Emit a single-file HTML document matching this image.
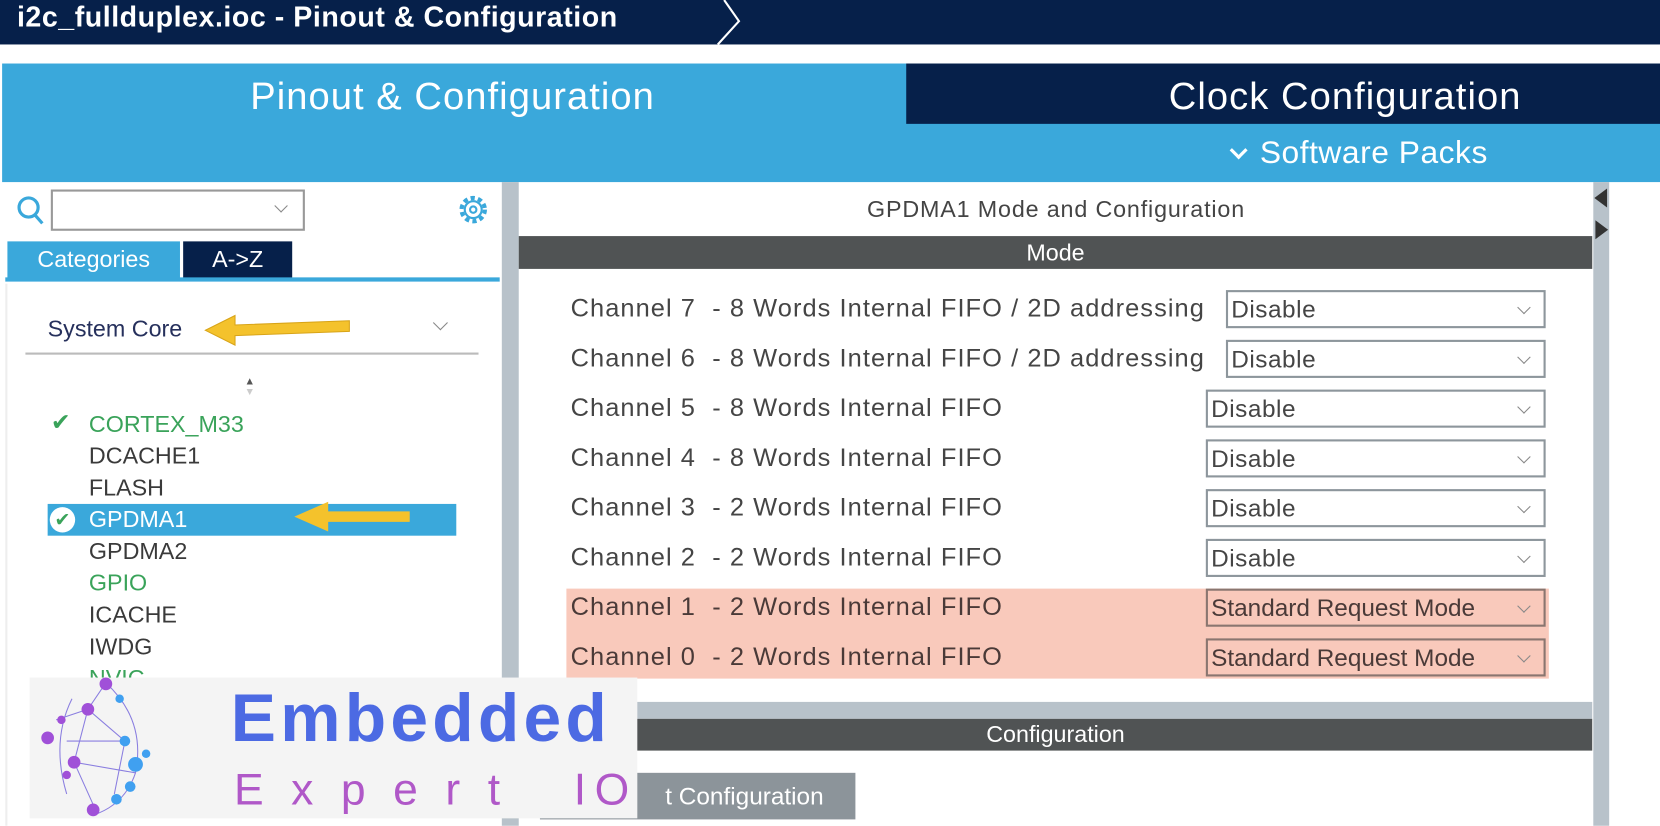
<!DOCTYPE html>
<html><head><meta charset="utf-8"><style>
*{margin:0;padding:0;box-sizing:border-box}
html,body{width:1660px;height:826px;overflow:hidden;background:#fff}
#w{position:absolute;left:0;top:0;width:1568px;height:780px;transform:scale(1.05867);transform-origin:0 0;font-family:"Liberation Sans",sans-serif}
.a{position:absolute}
.t{position:absolute;white-space:nowrap}
.lbl{font-size:24px;color:#454545;left:539px;letter-spacing:1px;white-space:pre}
.sel{position:absolute;height:36px;border:2px solid #8d969c;background:#fff;font-size:23px;color:#454545;padding-left:3px;line-height:32px;left:1139px;width:321px;letter-spacing:0.5px}
.sel:after{content:"";position:absolute;right:14px;top:10px;width:8px;height:8px;border-right:1.5px solid #888;border-bottom:1.5px solid #888;transform:rotate(45deg)}
.pk{background:#f9c9bb;border-color:#8a7670;color:#4a3a38;letter-spacing:0}
.li{position:absolute;left:84px;font-size:22px;color:#3a3a3a}
.g{color:#3aa35a}
</style></head><body><div id="w">
<div class="a" style="left:0;top:0;width:1568px;height:42px;background:#06204a"></div>
<div class="t" style="left:16px;top:1px;font-size:27px;font-weight:bold;color:#fff;letter-spacing:0.5px">i2c_fullduplex.ioc - Pinout &amp; Configuration</div>
<svg class="a" style="left:670px;top:0" width="40" height="42"><path d="M14 0 L28 20 L8 42" stroke="#fff" stroke-width="2" fill="none"/></svg>
<div class="a" style="left:2px;top:60px;width:1566px;height:112px;background:#3aa8db"></div>
<div class="t" style="left:2px;top:70px;width:851px;text-align:center;font-size:36px;color:#fff;letter-spacing:1px">Pinout &amp; Configuration</div>
<div class="a" style="left:856px;top:60px;width:712px;height:57px;background:#06204a"></div>
<div class="t" style="left:1104px;top:70px;font-size:36px;color:#fff;letter-spacing:1px">Clock Configuration</div>
<div class="t" style="left:1160px;top:128px;font-size:30px;color:#fff;letter-spacing:0.5px"><span style="display:inline-block;width:12px;height:12px;border-right:3px solid #fff;border-bottom:3px solid #fff;transform:rotate(45deg);margin:0 14px 6px 4px"></span>Software Packs</div>

<svg class="a" style="left:14px;top:183px" width="30" height="32"><circle cx="13" cy="13" r="9" stroke="#3aa8db" stroke-width="3" fill="none"/><path d="M19 20 L26 28" stroke="#3aa8db" stroke-width="3"/></svg>
<div class="a" style="left:48px;top:179px;width:240px;height:39px;border:2px solid #999"></div>
<div class="a" style="left:261px;top:190px;width:9px;height:9px;border-right:1.5px solid #888;border-bottom:1.5px solid #888;transform:rotate(45deg)"></div>
<svg class="a" style="left:432px;top:183px" width="30" height="32"><circle cx="15" cy="15" r="11" stroke="#3aa8db" stroke-width="4" stroke-dasharray="4 3" fill="none"/><circle cx="15" cy="15" r="8" stroke="#3aa8db" stroke-width="2" fill="none"/><circle cx="15" cy="15" r="3" stroke="#3aa8db" stroke-width="2" fill="none"/></svg>
<div class="a" style="left:7px;top:228px;width:163px;height:36px;background:#3aa8db;color:#fff;font-size:22px;text-align:center;line-height:34px">Categories</div>
<div class="a" style="left:173px;top:228px;width:103px;height:36px;background:#06204a;color:#fff;font-size:22px;text-align:center;line-height:34px">A-&gt;Z</div>
<div class="a" style="left:5px;top:262px;width:467px;height:4px;background:#3aa8db"></div>
<div class="a" style="left:5px;top:268px;width:2px;height:512px;background:#eee"></div>
<div class="t" style="left:45px;top:298px;font-size:22px;color:#26305c">System Core</div>
<div class="a" style="left:411px;top:300px;width:10px;height:10px;border-right:1.5px solid #888;border-bottom:1.5px solid #888;transform:rotate(45deg)"></div>
<div class="a" style="left:24px;top:333px;width:428px;height:2px;background:#bbb"></div>
<div class="t" style="left:231px;top:356px;font-size:10px;color:#555;line-height:10px">▲<br><span style="color:#ccc">▼</span></div>
<div class="t" style="left:48px;top:386px;font-size:22px;color:#3aa35a">✔</div>
<div class="li g" style="top:388px">CORTEX_M33</div>
<div class="li" style="top:418px">DCACHE1</div>
<div class="li" style="top:448px">FLASH</div>
<div class="a" style="left:45px;top:476px;width:386px;height:30px;background:#3aa8db"></div>
<div class="a" style="left:47px;top:479px;width:24px;height:24px;border-radius:50%;background:#fff;color:#3aa35a;font-size:18px;text-align:center;line-height:24px">✔</div>
<div class="li" style="top:478px;color:#fff">GPDMA1</div>
<div class="li" style="top:508px">GPDMA2</div>
<div class="li g" style="top:538px">GPIO</div>
<div class="li" style="top:568px">ICACHE</div>
<div class="li" style="top:598px">IWDG</div>
<div class="li g" style="top:628px">NVIC</div>

<svg class="a" style="left:180px;top:290px" width="160" height="40"><path d="M150 13 L42 17 L42 8 L14 22 L42 36 L42 27 L150 23 Z" fill="#f4c22c" stroke="#d8a418" stroke-width="1"/></svg>
<svg class="a" style="left:270px;top:470px" width="130" height="36"><path d="M117 13 L40 13 L40 4 L8 18 L40 32 L40 23 L117 23 Z" fill="#f4c22c"/></svg>

<div class="a" style="left:474px;top:172px;width:16px;height:608px;background:#b8c2ca"></div>
<div class="a" style="left:1505px;top:172px;width:15px;height:608px;background:#b8c2ca"></div>
<div class="a" style="left:1506px;top:178px;width:0;height:0;border-top:9px solid transparent;border-bottom:9px solid transparent;border-right:12px solid #333"></div>
<div class="a" style="left:1507px;top:208px;width:0;height:0;border-top:9px solid transparent;border-bottom:9px solid transparent;border-left:12px solid #333"></div>
<div class="t" style="left:490px;top:185px;width:1015px;text-align:center;font-size:22px;color:#444;letter-spacing:0.8px">GPDMA1 Mode and Configuration</div>
<div class="a" style="left:490px;top:223px;width:1014px;height:31px;background:#505354;color:#fff;font-size:22px;text-align:center;line-height:31px">Mode</div>

<div class="a" style="left:535px;top:556px;width:928px;height:85px;background:#f9c9bb"></div>
<div class="t lbl" style="top:278px">Channel 7  - 8 Words Internal FIFO / 2D addressing</div>
<div class="t lbl" style="top:325px">Channel 6  - 8 Words Internal FIFO / 2D addressing</div>
<div class="t lbl" style="top:372px">Channel 5  - 8 Words Internal FIFO</div>
<div class="t lbl" style="top:419px">Channel 4  - 8 Words Internal FIFO</div>
<div class="t lbl" style="top:466px">Channel 3  - 2 Words Internal FIFO</div>
<div class="t lbl" style="top:513px">Channel 2  - 2 Words Internal FIFO</div>
<div class="t lbl" style="top:560px;color:#4a3a38">Channel 1  - 2 Words Internal FIFO</div>
<div class="t lbl" style="top:607px;color:#4a3a38">Channel 0  - 2 Words Internal FIFO</div>
<div class="sel" style="top:274px;left:1158px;width:302px">Disable</div>
<div class="sel" style="top:321px;left:1158px;width:302px">Disable</div>
<div class="sel" style="top:368px">Disable</div>
<div class="sel" style="top:415px">Disable</div>
<div class="sel" style="top:462px">Disable</div>
<div class="sel" style="top:509px">Disable</div>
<div class="sel pk" style="top:556px">Standard Request Mode</div>
<div class="sel pk" style="top:603px">Standard Request Mode</div>

<div class="a" style="left:490px;top:663px;width:1014px;height:16px;background:#b8c2ca"></div>
<div class="a" style="left:490px;top:679px;width:1014px;height:30px;background:#505354;color:#fff;font-size:22px;text-align:center;line-height:30px">Configuration</div>
<div class="a" style="left:510px;top:730px;width:298px;height:44px;background:#8c949a;color:#fff;font-size:23px;line-height:44px;text-align:right;padding-right:30px">t Configuration</div>

<div class="a" style="left:28px;top:640px;width:574px;height:133px;background:#f4f4f4;overflow:hidden">
<svg class="a" style="left:0;top:0" width="150" height="133">
<g stroke="#8a7ee0" stroke-width="1" fill="none"><path d="M72 5 Q110 40 100 90 Q90 120 60 130"/><path d="M40 20 Q20 60 35 110"/><path d="M72 5 L55 30 L42 80 L60 120"/><path d="M55 30 L90 60 L80 110"/><path d="M35 60 L90 60"/><path d="M42 80 L100 90"/><path d="M25 40 L55 30"/></g>
<g fill="#a050d8"><circle cx="72" cy="6" r="6"/><circle cx="55" cy="30" r="6"/><circle cx="42" cy="80" r="6"/><circle cx="17" cy="57" r="6"/><circle cx="30" cy="40" r="4"/><circle cx="35" cy="92" r="4"/><circle cx="60" cy="125" r="6"/></g>
<g fill="#40a0f0"><circle cx="85" cy="20" r="4"/><circle cx="90" cy="60" r="5"/><circle cx="100" cy="82" r="7"/><circle cx="110" cy="72" r="4"/><circle cx="95" cy="103" r="5"/><circle cx="82" cy="115" r="5"/></g>
</svg>
<div class="t" style="left:190px;top:1px;font-size:64px;font-weight:bold;color:#4c6ae3;letter-spacing:4px">Embedded</div>
<div class="t" style="left:193px;top:82px;font-size:42px;color:#b058c8;letter-spacing:26px">Expert</div>
<div class="t" style="left:514px;top:82px;font-size:42px;color:#b058c8;letter-spacing:8px">IO</div>
</div>
</div></body></html>
